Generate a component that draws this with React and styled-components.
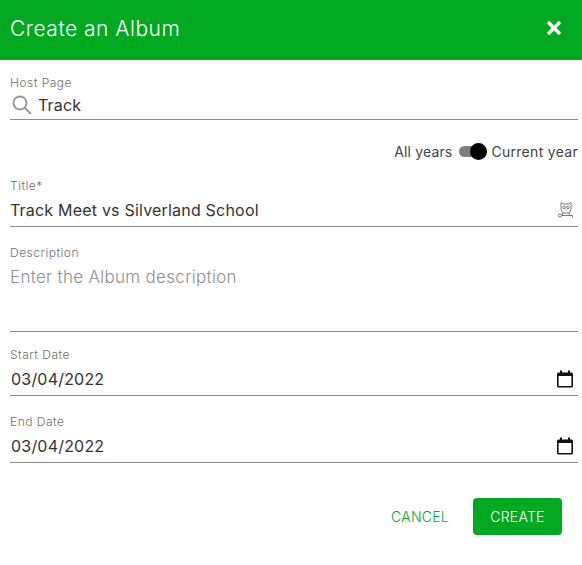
import React from 'react';
import styled, { createGlobalStyle } from 'styled-components';

const GREEN = '#00a91f';

const Global = createGlobalStyle`
    html, body { margin: 0; padding: 0; background: #fff; }
    body { font-family: Inter, "Open Sans", sans-serif; }
`;

const Dialog = styled.div`
    width: 582px;
    height: 565px;
    background: #fff;
    overflow: hidden;
`;

const Header = styled.header`
    height: 60px;
    box-sizing: border-box;
    background: ${GREEN};
    display: flex;
    align-items: center;
    justify-content: space-between;
    padding: 0 20px 4px 10px;
    color: #fff;
`;

const Title = styled.h1`
    margin: 0;
    font-size: 21px;
    font-weight: 300;
    letter-spacing: 0.5px;
`;

const CloseButton = styled.button`
    display: flex;
    padding: 0;
    border: 0;
    background: none;
`;

const Form = styled.form`
    display: flex;
    flex-direction: column;
    padding: 16px 4px 0 10px;
`;

const Field = styled.div`
    display: flex;
    flex-direction: column;
    margin-top: ${(p) => p.$top || 0}px;
`;

const Label = styled.label`
    height: 14px;
    font-size: 12px;
    font-weight: 300;
    line-height: 14px;
    letter-spacing: 0.5px;
    color: #707070;
`;

const InputRow = styled.div`
    display: flex;
    align-items: center;
    height: ${(p) => p.$height}px;
    padding-top: 1px;
    box-sizing: border-box;
    border-bottom: 1px solid #8c8c8c;
`;

const Value = styled.span`
    flex: 1;
    padding-left: ${(p) => p.$inset || 0}px;
    font-size: 16px;
    letter-spacing: ${(p) => p.$spacing ?? 0.2}px;
    color: #333;
`;

const Placeholder = styled.div`
    height: ${(p) => p.$height}px;
    padding-top: 6px;
    box-sizing: border-box;
    font-size: 17px;
    font-weight: 300;
    line-height: 22px;
    letter-spacing: 0.3px;
    color: #8f8f8f;
    border-bottom: 1px solid #8c8c8c;
`;

const SearchIcon = styled.svg`
    width: 22px;
    height: 22px;
    margin: 0 5px 0 1px;
    fill: none;
    stroke: #9a9a9a;
    stroke-width: 2;
`;

const YearToggle = styled.div`
    display: flex;
    align-items: center;
    justify-content: flex-end;
    height: 20px;
    margin-top: 21px;
    font-size: 14px;
    letter-spacing: 0.3px;
    color: #444;
`;

const YearOff = styled.span`
    letter-spacing: 0.15px;
`;

const Track = styled.span`
    position: relative;
    width: 28px;
    height: 11px;
    margin: 0 4px 0 7px;
    border-radius: 6px;
    background: #7f7f7f;
`;

const Knob = styled.span`
    position: absolute;
    right: 0;
    top: -3px;
    width: 17px;
    height: 17px;
    border-radius: 50%;
    background: #000;
`;

const Actions = styled.div`
    display: flex;
    align-items: center;
    justify-content: flex-end;
    gap: 8px;
    margin-top: 35px;
    padding-right: 16px;
`;

const ActionButton = styled.button`
    width: ${(p) => p.$width}px;
    height: 37px;
    padding: 0;
    border: 0;
    border-radius: 4px;
    font-family: inherit;
    font-size: 14px;
    font-weight: 300;
    letter-spacing: 0.25px;
    color: ${(p) => (p.$filled ? '#fff' : GREEN)};
    background: ${(p) => (p.$filled ? GREEN : 'transparent')};
`;

const IconSlot = styled.span`
    display: flex;
    margin-right: ${(p) => p.$right}px;
`;

const CalendarIcon = () => (
    <IconSlot $right={4}>
        <svg width="18" height="18" viewBox="0 0 18 18" aria-hidden="true">
            <path fill="#111" d="M4 0.5h2v2h6v-2h2v2h1.5A1.5 1.5 0 0 1 17 4v12a1.5 1.5 0 0 1-1.5 1.5h-13A1.5 1.5 0 0 1 1 16V4a1.5 1.5 0 0 1 1.5-1.5H4zM2.6 6v9.9h12.8V6z" />
        </svg>
    </IconSlot>
);

const MascotIcon = () => (
    <IconSlot $right={3}>
        <svg width="18" height="18" viewBox="0 0 18 18" fill="none" stroke="#6f7f7a" strokeWidth="1" aria-hidden="true">
            <path d="M4 1.5l2 1.5h6l2-1.5v6.5l-1.5 4h-7L4 8z" />
            <circle cx="7" cy="6.5" r="1.3" />
            <circle cx="11" cy="6.5" r="1.3" />
            <path d="M8.3 6.5h1.4M9 8.5v1M6 12l-1 3M12 12l1 3" />
            <circle cx="3" cy="14.5" r="1.6" />
            <path d="M4.6 14.5h11M15.5 14.5v2" />
        </svg>
    </IconSlot>
);

const DateField = ({ label, top }) => (
    <Field $top={top}>
        <Label>{label}</Label>
        <InputRow $height={34}>
            <Value $inset={1} $spacing={0.2}>03/04/2022</Value>
            <CalendarIcon />
        </InputRow>
    </Field>
);

const App = () => (
    <Dialog>
        <Global />
        <Header>
            <Title>Create an Album</Title>
            <CloseButton type="button" aria-label="Close">
                <svg width="16" height="16" viewBox="0 0 16 16" aria-hidden="true">
                    <path d="M2 2l12 12M14 2L2 14" stroke="#fff" strokeWidth="3.4" />
                </svg>
            </CloseButton>
        </Header>
        <Form>
            <Field>
                <Label>Host Page</Label>
                <InputRow $height={30}>
                    <SearchIcon viewBox="0 0 22 22" aria-hidden="true">
                        <circle cx="9" cy="9" r="6.5" />
                        <path d="M13.5 13.5l6.5 6.5" />
                    </SearchIcon>
                    <Value>Track</Value>
                </InputRow>
            </Field>
            <YearToggle>
                <YearOff>All years</YearOff>
                <Track><Knob /></Track>
                Current year
            </YearToggle>
            <Field $top={18}>
                <Label>Title*</Label>
                <InputRow $height={34}>
                    <Value>Track Meet vs Silverland School</Value>
                    <MascotIcon />
                </InputRow>
            </Field>
            <Field $top={19}>
                <Label>Description</Label>
                <Placeholder $height={72}>Enter the Album description</Placeholder>
            </Field>
            <DateField label="Start Date" top={16} />
            <DateField label="End Date" top={19} />
            <Actions>
                <ActionButton type="button" $width={90}>CANCEL</ActionButton>
                <ActionButton type="button" $width={89} $filled>CREATE</ActionButton>
            </Actions>
        </Form>
    </Dialog>
);

export default App;
